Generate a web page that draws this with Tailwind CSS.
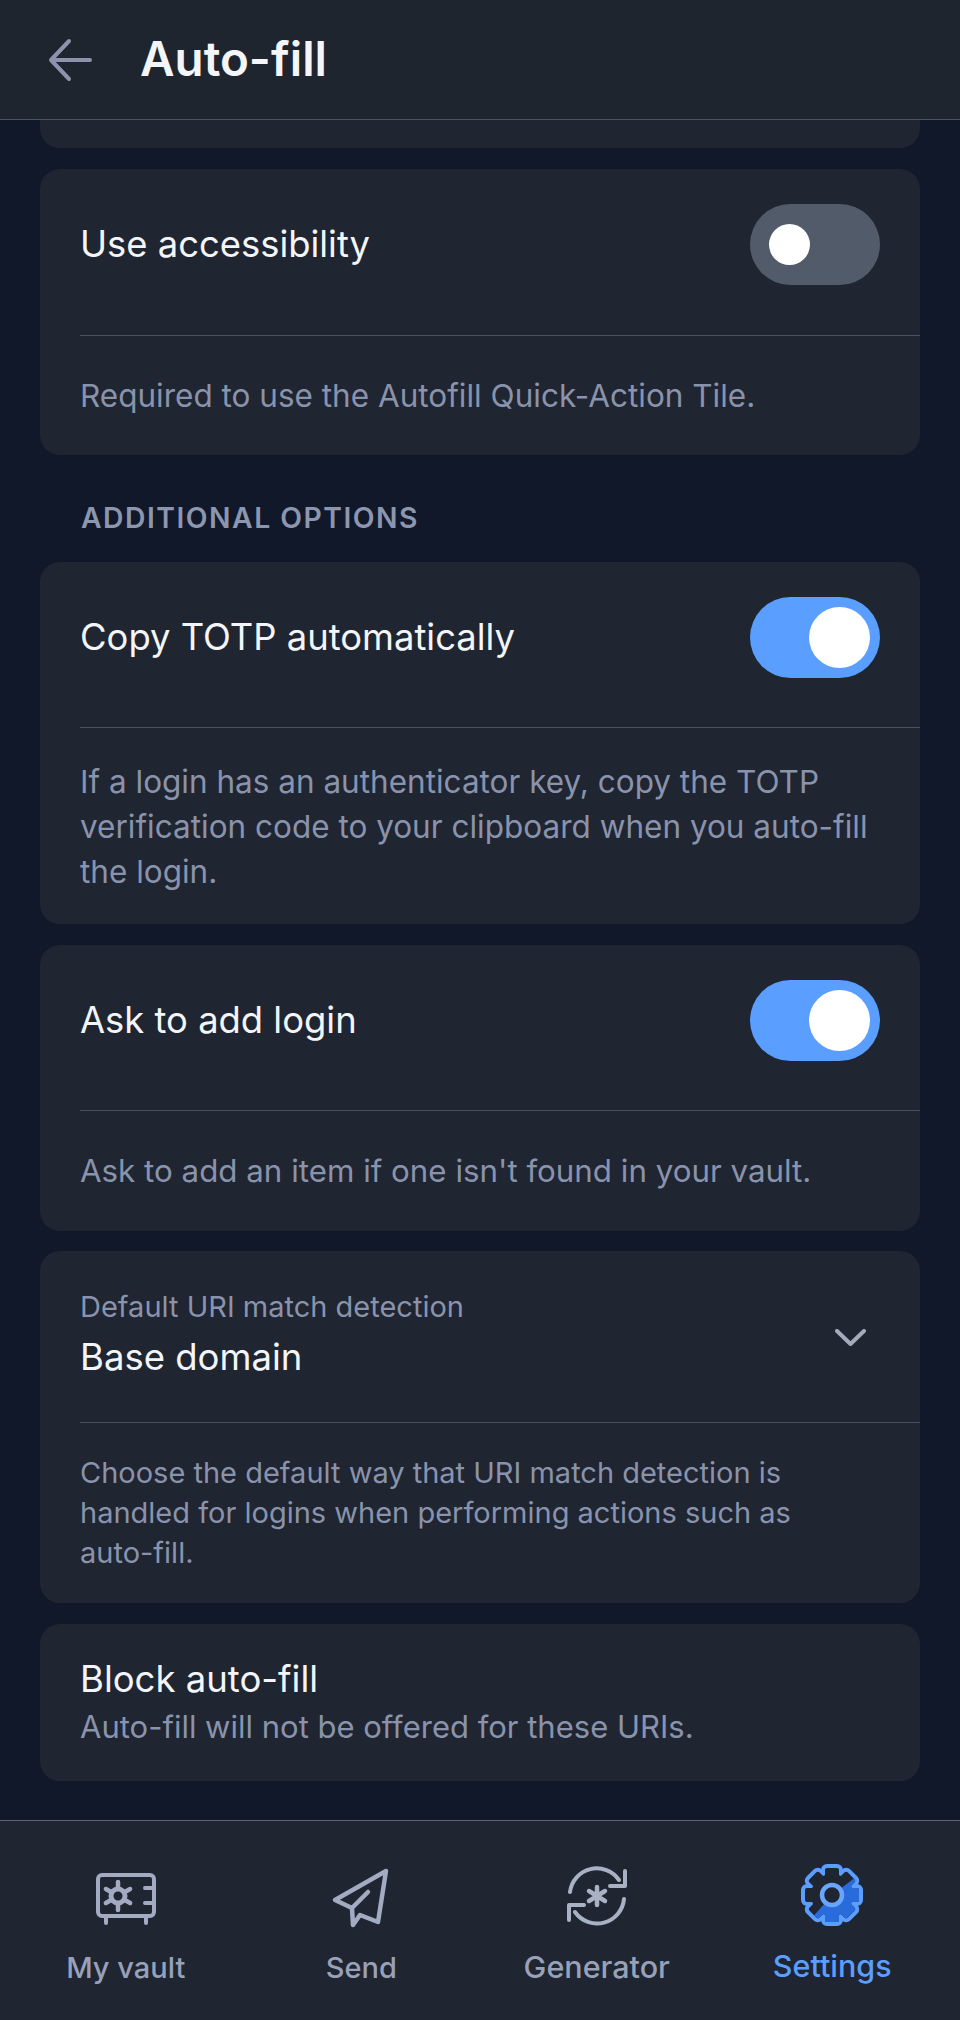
<!doctype html>
<html><head><meta charset="utf-8"><script src="https://cdn.jsdelivr.net/npm/@tailwindcss/browser@4"></script></head>
<body class="m-0 bg-[#111827]">
<div class="w-[960px] h-[2020px] flex flex-col overflow-hidden bg-[#111829] font-['Inter',sans-serif]">
  <header class="h-[120px] shrink-0 flex items-center bg-[#1f252f] border-b border-b-[#4b5260] pl-[48px]">
    <svg class="w-[44px] h-[44px]" viewBox="0 0 44 44" fill="none" stroke="#8e93ad" stroke-width="4" stroke-linecap="round" stroke-linejoin="round"><path d="M42 22H4M21 3L3 22l18 19"/></svg>
    <h1 class="ml-[48px] text-[47.5px] leading-none font-semibold text-[#f3f5f9] -mt-[2px]">Auto-fill</h1>
  </header>
  <main class="flex-1 overflow-hidden flex flex-col px-[40px]">
    <div class="h-[28px] shrink-0 rounded-b-[20px] bg-[#1f2531]"></div>

    <section class="mt-[21px] h-[286px] shrink-0 rounded-[20px] bg-[#1f2531] flex flex-col">
      <div class="h-[166px] shrink-0 flex justify-between pl-[40px] pr-[40px] pt-[35px]">
        <span class="h-[81px] flex items-center text-[36.4px] text-[#f3f5f9]">Use accessibility</span>
        <span class="w-[130px] h-[81px] rounded-full bg-[#525b6a] flex items-center pl-[19px]"><span class="w-[41px] h-[41px] rounded-full bg-white"></span></span>
      </div>
      <div class="h-[1px] shrink-0 ml-[40px] bg-[#4a515f]"></div>
      <p class="flex-1 flex items-center pl-[40px] text-[31.5px] text-[#8a93ac]">Required to use the Autofill Quick-Action Tile.</p>
    </section>

    <h2 class="mt-[47px] ml-[41px] h-[32px] leading-[32px] text-[28.3px] font-semibold tracking-[1.5px] text-[#8c96ae]">ADDITIONAL OPTIONS</h2>

    <section class="mt-[28px] h-[362px] shrink-0 rounded-[20px] bg-[#1f2531] flex flex-col">
      <div class="h-[165px] shrink-0 flex justify-between pl-[40px] pr-[40px] pt-[35px]">
        <span class="h-[81px] flex items-center text-[36.4px] text-[#f3f5f9]">Copy TOTP automatically</span>
        <span class="w-[130px] h-[81px] rounded-full bg-[#5a9eff] flex items-center justify-end pr-[10px]"><span class="w-[61px] h-[61px] rounded-full bg-white"></span></span>
      </div>
      <div class="h-[1px] shrink-0 ml-[40px] bg-[#4a515f]"></div>
      <p class="flex-1 flex items-center pl-[40px] pr-[40px] text-[31.5px] leading-[45px] text-[#8a93ac]">If a login has an authenticator key, copy the TOTP verification code to your clipboard when you auto-fill the login.</p>
    </section>

    <section class="mt-[21px] h-[286px] shrink-0 rounded-[20px] bg-[#1f2531] flex flex-col">
      <div class="h-[165px] shrink-0 flex justify-between pl-[40px] pr-[40px] pt-[35px]">
        <span class="h-[81px] flex items-center text-[36.4px] text-[#f3f5f9]">Ask to add login</span>
        <span class="w-[130px] h-[81px] rounded-full bg-[#5a9eff] flex items-center justify-end pr-[10px]"><span class="w-[61px] h-[61px] rounded-full bg-white"></span></span>
      </div>
      <div class="h-[1px] shrink-0 ml-[40px] bg-[#4a515f]"></div>
      <p class="flex-1 flex items-center pl-[40px] text-[31.3px] text-[#8a93ac]">Ask to add an item if one isn't found in your vault.</p>
    </section>

    <section class="mt-[20px] h-[352px] shrink-0 rounded-[20px] bg-[#1f2531] flex flex-col">
      <div class="h-[171px] shrink-0 flex justify-between pl-[40px] pr-[54px]">
        <div class="flex flex-col pt-[36px]">
          <span class="h-[40px] leading-[40px] text-[29px] text-[#8a93ac]">Default URI match detection</span>
          <span class="h-[60px] leading-[60px] text-[36.5px] text-[#f3f5f9]">Base domain</span>
        </div>
        <svg class="w-[31px] h-[17px] mt-[78px]" viewBox="0 0 31 17" fill="none" stroke="#a3abbb" stroke-width="4" stroke-linecap="round" stroke-linejoin="round"><path d="M2 2l13.500 13L29 2"/></svg>
      </div>
      <div class="h-[1px] shrink-0 ml-[40px] bg-[#4a515f]"></div>
      <p class="flex-1 flex items-center pl-[40px] pr-[80px] text-[29px] leading-[40px] text-[#8a93ac]">Choose the default way that URI match detection is handled for logins when performing actions such as auto-fill.</p>
    </section>

    <section class="mt-[21px] h-[157px] shrink-0 rounded-[20px] bg-[#1f2531] flex flex-col justify-center pl-[40px]">
      <span class="h-[48px] leading-[48px] text-[36.5px] text-[#f3f5f9]">Block auto-fill</span>
      <span class="h-[48px] leading-[48px] text-[31px] text-[#8a93ac]">Auto-fill will not be offered for these URIs.</span>
    </section>
  </main>
  <nav class="h-[200px] shrink-0 grid grid-cols-4 bg-[#1f2531] border-t border-t-[#5c6375] pl-[8px] pr-[10px]">
    <div class="flex flex-col items-center">
      <svg class="mt-[52px] w-[60px] h-[52px]" viewBox="0 0 60 52" fill="none" stroke="#a3abc2" stroke-width="4" stroke-linecap="round" stroke-linejoin="round">
        <rect x="2" y="2" width="56" height="41" rx="4"/><path d="M10 44v6M50 44v6M49 15h8M49 30h8"/>
        <circle cx="22" cy="23" r="7" stroke-width="5"/><path stroke-width="4.5" d="M22 9v5M22 32v5M9.900 16l4.300 2.500M29.800 27.500l4.300 2.500M9.900 30l4.300-2.500M29.800 18.500l4.300-2.500"/>
      </svg>
      <span class="mt-[25px] text-[29px] leading-[36px] font-medium text-[#98a1b8]">My vault</span>
    </div>
    <div class="flex flex-col items-center">
      <svg class="mt-[46px] w-[66px] h-[62px]" viewBox="0 0 66 62" fill="none" stroke="#a3abc2" stroke-width="4.5" stroke-linecap="round" stroke-linejoin="round"><path d="M58 4L7 33l17 8 1 17 7-10 18 7zM24 41l16-16"/></svg>
      <span class="mt-[21px] text-[29px] leading-[36px] font-medium text-[#98a1b8]">Send</span>
    </div>
    <div class="flex flex-col items-center">
      <svg class="mt-[45px] w-[60px] h-[60px]" viewBox="0 0 60 60" fill="none" stroke="#a9b1c4" stroke-width="4" stroke-linecap="round" stroke-linejoin="round"><path d="M3 26A27 27 0 0 1 52 14M58 5V20H43M57 33A27 27 0 0 1 8 46M2 54V39H17"/><path d="M30 21v18M22 25l16 10M22 35l16-10" stroke-width="4.5"/></svg>
      <span class="mt-[23px] text-[30.5px] leading-[36px] font-medium text-[#98a1b8]">Generator</span>
    </div>
    <div class="flex flex-col items-center">
      <svg class="mt-[42px] w-[64px] h-[64px]" viewBox="0 0 64 64">
        <defs>
          <g id="gear"><circle cx="32" cy="32" r="21"/><rect x="25" y="5" width="14" height="54" rx="2"/><rect x="25" y="5" width="14" height="54" rx="2" transform="rotate(45 32 32)"/><rect x="25" y="5" width="14" height="54" rx="2" transform="rotate(90 32 32)"/><rect x="25" y="5" width="14" height="54" rx="2" transform="rotate(135 32 32)"/></g>
          <mask id="wedge"><path d="M32 32L64 8V64H4z" fill="#fff"/></mask>
        </defs>
        <use href="#gear" fill="#5a9eff" stroke="#5a9eff" stroke-width="8" stroke-linejoin="round"/>
        <use href="#gear" fill="#1f2531"/>
        <use href="#gear" fill="#2a6bdc" mask="url(#wedge)"/>
        <circle cx="32" cy="32" r="10" fill="#1f2531" stroke="#69a6ff" stroke-width="4.5"/>
      </svg>
      <span class="mt-[21px] text-[30.5px] leading-[36px] font-medium text-[#5a9eff]">Settings</span>
    </div>
  </nav>
</div>
</body></html>
